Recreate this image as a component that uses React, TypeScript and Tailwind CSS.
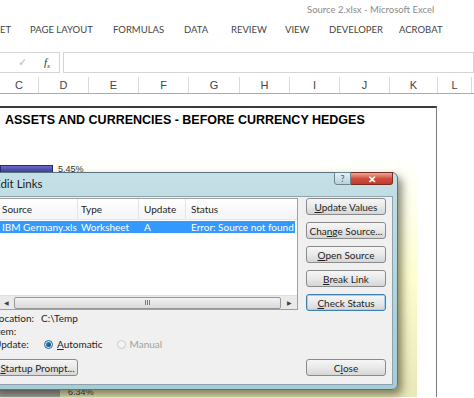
import React from 'react';

const ui = "font-['Lato','Open_Sans',sans-serif]";

const tabs = [
  { label: 'ET', x: 'w-[30px]' },
  { label: 'PAGE LAYOUT', x: 'w-[83px]' },
  { label: 'FORMULAS', x: 'w-[71px]' },
  { label: 'DATA', x: 'w-[47px]' },
  { label: 'REVIEW', x: 'w-[54px]' },
  { label: 'VIEW', x: 'w-[44px]' },
  { label: 'DEVELOPER', x: 'w-[70px]' },
  { label: 'ACROBAT', x: 'w-[60px]' },
];

const columns = [
  { label: 'C', w: 'w-[39px]' },
  { label: 'D', w: 'w-[50px]' },
  { label: 'E', w: 'w-[50px]' },
  { label: 'F', w: 'w-[50px]' },
  { label: 'G', w: 'w-[51px]' },
  { label: 'H', w: 'w-[50px]' },
  { label: 'I', w: 'w-[50px]' },
  { label: 'J', w: 'w-[50px]' },
  { label: 'K', w: 'w-[48px]' },
  { label: 'L', w: 'w-[34px]' },
];

const Btn = ({ children, focus = false, w = 'w-[80px]' }: { children: React.ReactNode; focus?: boolean; w?: string }) => (
  <div
    className={`${w} h-[17px] shrink-0 rounded-[3px] border ${
      focus ? 'border-[#3c7fb1] shadow-[inset_0_0_0_1px_#9ad4f2]' : 'border-[#8a8a8a]'
    } bg-gradient-to-b from-[#f6f6f6] via-[#e9e9e9] to-[#d6d6d6] flex items-center justify-center text-[10px] text-[#1e1e1e] leading-none whitespace-nowrap`}
  >
    {children}
  </div>
);

const EditLinksDialog = () => (
  <div className="absolute left-[-10px] top-[172px] w-[408px] h-[218px] rounded-[6px] border border-[#5a7380] bg-gradient-to-b from-[#c5e0e6] via-[#b2d5dd] to-[#a6ccd5] shadow-[4px_5px_8px_rgba(40,40,20,0.55)] px-[4px] pb-[4px] pt-[23px] flex flex-col">
    {/* caption */}
    <div className="absolute left-[3px] top-[5px] text-[11.5px] text-[#1a1a1a] leading-none">Edit Links</div>
    <div className="absolute right-[4px] top-[-1px] flex h-[13px]">
      <div className="w-[17px] h-full border border-[#6b8491] rounded-bl-[3px] bg-gradient-to-b from-[#e6f0f3] to-[#b9d2da] flex items-center justify-center text-[9px] text-[#3a5866] leading-none">
        ?
      </div>
      <div className="w-[42px] h-full border border-[#7a2b22] border-l-0 rounded-br-[3px] bg-gradient-to-b from-[#eaa89c] via-[#cf4f40] to-[#c23a2a] flex items-center justify-center text-[10px] font-bold text-white leading-none">
        ✕
      </div>
    </div>

    {/* client area */}
    <div className="flex-1 bg-[#f0f0f0] border border-[#8ea3ad] pl-[1px] pr-[6px] pt-[1px] pb-[8px] flex gap-[8px]">
      <div className="w-[301px] flex flex-col">
        {/* list view */}
        <div className="h-[112px] border border-[#a0a0a0] bg-white flex flex-col">
          <div className="h-[21px] flex text-[10px] text-[#1e1e1e] bg-gradient-to-b from-white to-[#f3f4f6] border-b border-[#e3e5e8]">
            <div className="w-[80px] pl-[4px] flex items-center border-r border-[#e3e5e8]">Source</div>
            <div className="w-[61px] pl-[3px] flex items-center border-r border-[#e3e5e8]">Type</div>
            <div className="w-[47px] pl-[5px] flex items-center border-r border-[#e3e5e8]">Update</div>
            <div className="flex-1 pl-[5px] flex items-center">Status</div>
          </div>
          <div className="mt-[1px] mr-[2px] h-[12px] bg-[#3399ff] flex text-[10px] text-white leading-none items-center whitespace-nowrap">
            <div className="w-[80px] pl-[4px]">IBM Germany.xls</div>
            <div className="w-[61px] pl-[3px]">Worksheet</div>
            <div className="w-[47px] pl-[5px]">A</div>
            <div className="flex-1 pl-[5px]">Error: Source not found</div>
          </div>
          <div className="flex-1" />
          {/* horizontal scrollbar */}
          <div className="h-[14px] bg-[#eaeaea] border-t border-[#e0e0e0] flex items-center">
            <div className="w-[16px] flex justify-center text-[6px] text-[#404040]">◀</div>
            <div className="flex-1 h-[12px] rounded-[2px] border border-[#979797] bg-gradient-to-b from-[#f2f2f2] to-[#d9d9d9] flex items-center justify-center">
              <div className="flex gap-[1px]">
                <div className="w-[1px] h-[5px] bg-[#777]" />
                <div className="w-[1px] h-[5px] bg-[#777]" />
                <div className="w-[1px] h-[5px] bg-[#777]" />
              </div>
            </div>
            <div className="w-[16px] flex justify-center text-[6px] text-[#404040]">▶</div>
          </div>
        </div>

        {/* details */}
        <div className="mt-[2px] flex flex-col text-[10px] text-[#1e1e1e] leading-[13px] whitespace-nowrap">
          <div className="flex ml-[-3px]">
            <span className="w-[47px]">Location:</span>
            <span>C:\Temp</span>
          </div>
          <div className="ml-[-3px]">Item:</div>
          <div className="flex items-center ml-[-3px]">
            <span className="w-[50px]">Update:</span>
            <span className="w-[9px] h-[9px] rounded-full border border-[#2c628b] bg-[#dbeaf5] flex items-center justify-center mr-[4px]">
              <span className="w-[5px] h-[5px] rounded-full bg-gradient-to-br from-[#3a8ad0] to-[#0d3f73]" />
            </span>
            <span>
              <u>A</u>utomatic
            </span>
            <span className="ml-[14px] w-[9px] h-[9px] rounded-full border border-[#c8c8c8] bg-[#f4f4f4] mr-[4px]" />
            <span className="text-[#a0a0a0]">Manual</span>
          </div>
        </div>
        <div className="flex-1" />
        <Btn w="w-[81px]">
          <span>
            <u>S</u>tartup Prompt...
          </span>
        </Btn>
      </div>

      <div className="w-[80px] flex flex-col gap-[7px]">
        <Btn>
          <span>
            <u>U</u>pdate Values
          </span>
        </Btn>
        <Btn>
          <span>
            Cha<u>n</u>ge Source...
          </span>
        </Btn>
        <Btn>
          <span>
            <u>O</u>pen Source
          </span>
        </Btn>
        <Btn>
          <span>
            <u>B</u>reak Link
          </span>
        </Btn>
        <Btn focus>
          <span>
            <u>C</u>heck Status
          </span>
        </Btn>
        <div className="flex-1" />
        <Btn>
          <span>
            C<u>l</u>ose
          </span>
        </Btn>
      </div>
    </div>
  </div>
);

export default function App() {
  return (
    <div className={`relative w-[474px] h-[398px] overflow-hidden bg-white ${ui}`}>
      {/* window title */}
      <div className="h-[20px] pl-[307px] flex items-center text-[9.5px] text-[#8a8a8a] whitespace-nowrap">
        Source 2.xlsx - Microsoft Excel
      </div>

      {/* ribbon tabs */}
      <div className="h-[20px] flex items-center text-[9.5px] text-[#444]">
        {tabs.map((t) => (
          <div key={t.label} className={`${t.x} shrink-0 whitespace-nowrap`}>
            {t.label}
          </div>
        ))}
      </div>

      {/* formula bar */}
      <div className="mt-[12px] h-[21px] flex gap-[3px]">
        <div className="w-[62px] ml-[-2px] border border-[#d4d4d4] flex items-center">
          <span className="ml-[19px] text-[11px] text-[#b8b8b8]">✓</span>
          <span className="ml-[17px] text-[11px] italic font-['Liberation_Serif',serif] text-[#333]">
            f<sub className="text-[7px]">x</sub>
          </span>
        </div>
        <div className="flex-1 border border-[#d4d4d4]" />
      </div>

      {/* column headers */}
      <div className="mt-[4px] h-[17px] flex border-b border-[#ababab] text-[11px] text-[#444] font-['Liberation_Sans',sans-serif]">
        {columns.map((c) => (
          <div
            key={c.label}
            className={`${c.w} shrink-0 flex items-center justify-center border-r border-[#dadada]`}
          >
            {c.label}
          </div>
        ))}
      </div>

      {/* sheet */}
      <div className="mt-[12px] w-[437px] h-[291px] border-t-2 border-r border-t-[#3a3a3a] border-r-[#7a7a7a] flex flex-col">
        <div className="pl-[5px] pt-[3px] h-[46px] text-[12.5px] font-bold text-black font-['Liberation_Sans',sans-serif] whitespace-nowrap">
          ASSETS AND CURRENCIES - BEFORE CURRENCY HEDGES
        </div>
        <div className="w-[417px] flex-1 bg-gradient-to-b from-[#ffffff] via-[#fdfdd0] to-[#e9e7b8] pt-[9px] flex flex-col">
          <div className="flex items-center gap-[5px]">
            <div className="w-[53px] h-[9px] bg-gradient-to-b from-[#6a6ac8] to-[#3a3a96] border border-[#2a2a70]" />
            <span className="text-[9px] text-[#333] font-['Liberation_Sans',sans-serif]">5.45%</span>
          </div>
          <div className="flex-1" />
          <div className="flex items-end gap-[8px] h-[11px]">
            <div className="w-[60px] h-[11px] bg-gradient-to-b from-[#8c8c8c] to-[#a8a8a8]" />
            <span className="text-[9px] leading-none text-[#333] font-['Liberation_Sans',sans-serif]">6.34%</span>
          </div>
        </div>
      </div>

      <EditLinksDialog />
    </div>
  );
}
